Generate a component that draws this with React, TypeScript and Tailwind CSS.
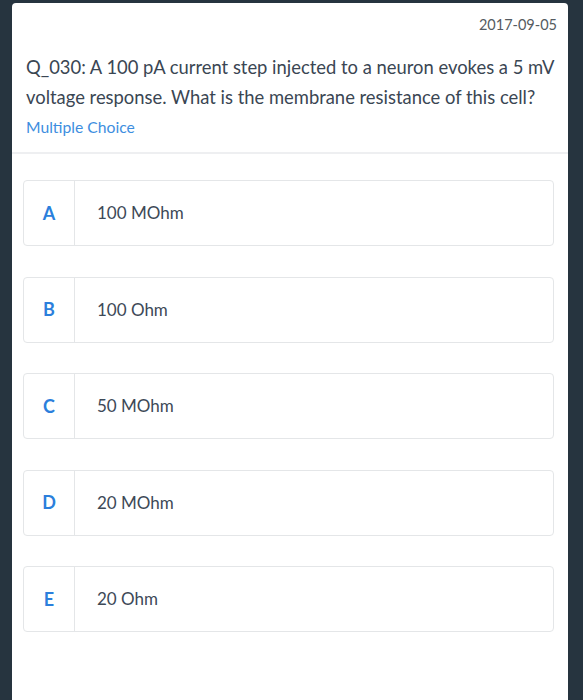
import React from "react";

const options = [
  { letter: "A", text: "100 MOhm" },
  { letter: "B", text: "100 Ohm" },
  { letter: "C", text: "50 MOhm" },
  { letter: "D", text: "20 MOhm" },
  { letter: "E", text: "20 Ohm" },
];

const App = () => {
  return (
    <div className="min-h-screen bg-[#26343f] pt-[3px] pl-[12px] pr-[15px]" style={{ fontFamily: "Lato, 'Noto Sans', sans-serif" }}>
      <div className="bg-white rounded-t-[4px] min-h-[697px]">
        <div className="pl-[14px] pr-[11px] pt-[13px]">
          <div className="text-right text-[14.5px] text-[#555b61] leading-[18px]">2017-09-05</div>
          <div className="mt-[18px] text-[18.4px] leading-[30px] text-[#3a4653]">
            Q_030: A 100 pA current step injected to a neuron evokes a 5 mV voltage response. What is the membrane resistance of this cell?
          </div>
          <div className="mt-[5px] text-[15.7px] leading-[20px] text-[#3d8ee0]">Multiple Choice</div>
        </div>
        <div className="mt-[15px] h-[2px] bg-[#eeeff1]" />
        <div className="px-[11px] pr-[14px] pt-[26px] flex flex-col gap-[30.5px]">
          {options.map((o) => (
            <div key={o.letter} className="flex h-[66px] border border-[#e4e6e8] rounded-[4px]">
              <div className="w-[51px] flex items-center justify-center border-r border-[#e4e6e8] text-[18px] font-bold text-[#2b7fdc]">
                {o.letter}
              </div>
              <div className="flex items-center pl-[22px] text-[17px] text-[#3d4957]">{o.text}</div>
            </div>
          ))}
        </div>
      </div>
    </div>
  );
};

export default App;
